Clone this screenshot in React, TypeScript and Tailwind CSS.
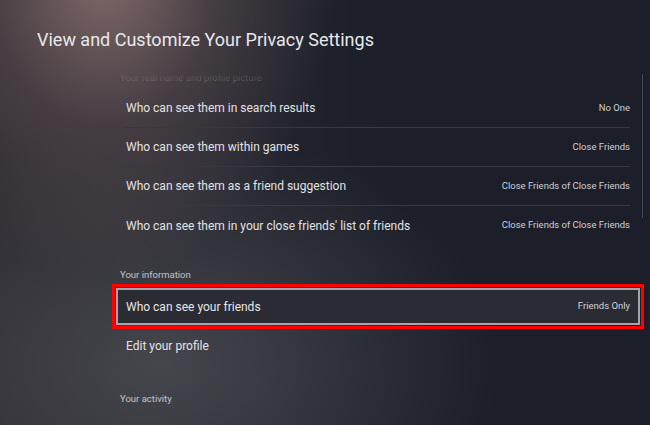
import React from 'react';

interface Row {
  label: string;
  value?: string;
}

const realNameRows: Row[] = [
  { label: 'Who can see them in search results', value: 'No One' },
  { label: 'Who can see them within games', value: 'Close Friends' },
  { label: 'Who can see them as a friend suggestion', value: 'Close Friends of Close Friends' },
  { label: "Who can see them in your close friends' list of friends", value: 'Close Friends of Close Friends' },
];

const SettingRow = ({ row, divider }: { row: Row; divider: boolean }) => (
  <div
    className={`ml-[4px] h-[39px] flex items-center justify-between pl-[2px] ${
      divider ? 'border-b border-[#363844]' : ''
    }`}
  >
    <span className="text-[12px] text-[#e2e2e4]">{row.label}</span>
    {row.value && <span className="text-[9.5px] text-[#cfcfd2]">{row.value}</span>}
  </div>
);

const App = () => {
  return (
    <div className="w-[650px] h-[425px] overflow-hidden font-[family-name:Roboto,sans-serif] bg-[radial-gradient(ellipse_230px_310px_at_105px_-30px,rgba(140,114,112,0.9),rgba(100,84,88,0.5)_50%,transparent_100%),radial-gradient(ellipse_340px_240px_at_160px_365px,rgba(80,81,87,0.75),transparent_100%),linear-gradient(90deg,#2b292f,#1c1f2a_60%,#1c1f2a)]">
      {/* page title */}
      <h1 className="pl-[37px] pt-[31px] text-[18px] leading-[18px] text-[#e8e8ea]">
        View and Customize Your Privacy Settings
      </h1>

      <div className="flex mt-[23px]">
        <div className="w-[120px] shrink-0" />

        <div className="w-[510px] shrink-0">
          {/* section label that's scrolled under the title */}
          <div className="h-[17px] overflow-hidden">
            <div className="text-[9.5px] leading-[11px] bg-gradient-to-b from-transparent to-[#8a8486]/60 bg-clip-text text-transparent">
              Your real name and profile picture
            </div>
          </div>

          {realNameRows.map((row, i) => (
            <SettingRow key={row.label} row={row} divider={i < realNameRows.length - 1} />
          ))}

          <div className="mt-[24px] h-[11px] text-[9.5px] leading-[11px] text-[#c4c4c8]">Your information</div>

          {/* focused item */}
          <div className="mt-[4px] ml-[-8px] w-[532px] border-[3px] border-[#ff0000] p-[1px]">
            <div className="h-[37px] border-2 border-[#a4a4ac] bg-[#2b2b33] flex items-center justify-between px-[8px]">
              <span className="text-[12px] text-[#e6e6e8]">Who can see your friends</span>
              <span className="text-[9.5px] text-[#d2d2d6]">Friends Only</span>
            </div>
          </div>

          <div className="mt-[-3px] ml-[4px] h-[39px] flex items-center pl-[2px]">
            <span className="text-[12px] text-[#e2e2e4]">Edit your profile</span>
          </div>

          <div className="mt-[28px] h-[11px] text-[9.5px] leading-[11px] text-[#c4c4c8]">Your activity</div>
        </div>

        {/* scrollbar */}
        <div className="ml-[12px] mt-[2px] w-px h-[144px] bg-[#454854]" />
      </div>
    </div>
  );
};

export default App;
